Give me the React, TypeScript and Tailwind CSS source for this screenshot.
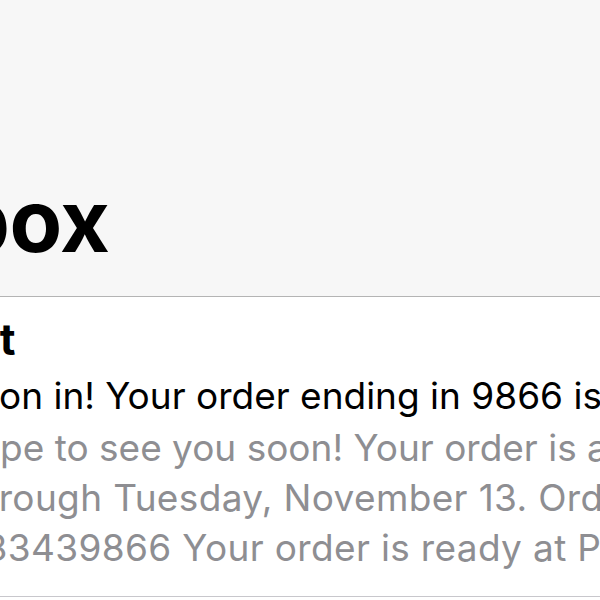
import React from "react";

const preview = [
  { text: "hope to see you soon! Your order is available", shift: "-ml-[44px] tracking-[0px]" },
  { text: "through Tuesday, November 13. Order", shift: "-ml-[36px] tracking-[0.35px]" },
  { text: "#783439866 Your order is ready at Pickup", shift: "-ml-[60px] tracking-[0.35px]" },
];

export default function App() {
  return (
    <div className="w-[600px] h-[600px] overflow-hidden bg-white font-['Inter',sans-serif] antialiased">
      {/* large title */}
      <div className="h-[297px] bg-[#f7f7f7] border-b border-[#b4b4b4] pt-[169px]">
        <h1 className="-ml-[121px] whitespace-nowrap text-[86px] leading-[104px] font-bold tracking-[-0.5px] text-black">
          Inbox
        </h1>
      </div>

      {/* message row */}
      <div className="border-b border-[#c8c7cc] pt-[16px] pb-[23px]">
        <div className="-ml-[120px] whitespace-nowrap text-[43px] leading-[52px] font-bold text-black">
          Target
        </div>
        <div className="mt-[8px] -ml-[1px] whitespace-nowrap text-[37px] leading-[45px] text-black">
          on in! Your order ending in 9866 is ready
        </div>
        <div className="mt-[5px] text-[37px] leading-[50px] text-[#8e8e92]">
          {preview.map((line, i) => (
            <div key={i} className={`whitespace-nowrap ${line.shift}`}>
              {line.text}
            </div>
          ))}
        </div>
      </div>
    </div>
  );
}
